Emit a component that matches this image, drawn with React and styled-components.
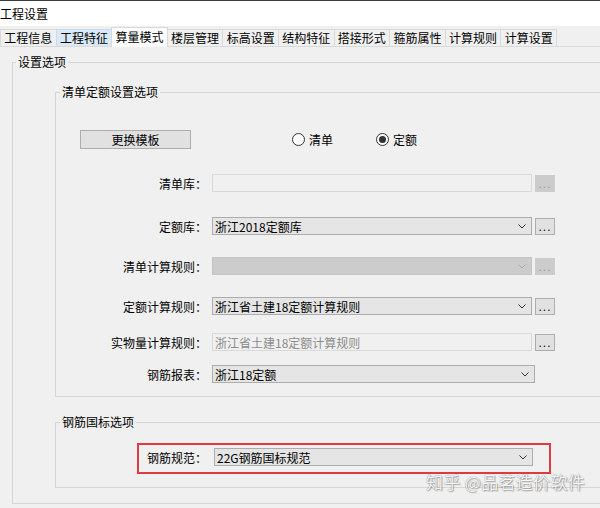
import React from 'react';
import styled, { createGlobalStyle } from 'styled-components';

const GlobalStyle = createGlobalStyle`
  html, body {
    margin: 0;
    padding: 0;
    overflow: hidden;
    background: #f0f0f0;
  }
  body {
    font-family: "Noto Sans CJK SC", "Microsoft YaHei", sans-serif;
    font-size: 12px;
    color: #000;
  }
`;

const Window = styled.div`
  position: relative;
  width: 600px;
  height: 508px;
  background: #f0f0f0;
  overflow: hidden;
`;

const TitleBar = styled.div`
  height: 25px;
  line-height: 25px;
  background: #fff;
  border-top: 1px solid #3a3a3a;
  padding-left: 0;
`;

const TabStrip = styled.div`
  display: flex;
  align-items: flex-end;
  height: 20px;
  border-bottom: 1px solid #d9d9d9;
`;

const Tab = styled.div`
  position: relative;
  box-sizing: border-box;
  width: 56.6px;
  margin-left: ${(p) => (p.$first ? '0' : '-1px')};
  height: ${(p) => (p.$active ? '20px' : '17px')};
  margin-bottom: ${(p) => (p.$active ? '-1px' : '0')};
  line-height: ${(p) => (p.$active ? '18px' : '16px')};
  text-align: center;
  border: 1px solid ${(p) => (p.$hover ? '#c5dcf2' : '#d9d9d9')};
  border-bottom: none;
  background: ${(p) => (p.$active ? '#fff' : p.$hover ? '#d9e9f8' : '#f0f0f0')};
  z-index: ${(p) => (p.$active ? 1 : 0)};
  white-space: nowrap;
`;

const TabPage = styled.div`
  padding: 7px 0 0 12px;
`;

const Group = styled.fieldset`
  margin: ${(p) => p.$top || 0}px 0 0 0;
  padding: 0;
  border: 1px solid #d5d5d5;
  min-inline-size: 0;
  width: ${(p) => p.$width || 'auto'};
  box-sizing: border-box;
`;

const Legend = styled.legend`
  padding: 0 2px;
  margin-left: ${(p) => p.$offset}px;
  line-height: 16px;
  font-size: 12px;
`;

const OuterBody = styled.div`
  padding: 14px 0 15px 42px;
`;

const SettingsBody = styled.div`
  display: flex;
  flex-direction: column;
  padding: 29px 0 13px 0;
`;

const TopRow = styled.div`
  display: flex;
  align-items: center;
  height: 20px;
  padding-left: 24px;
`;

const PushButton = styled.div`
  box-sizing: border-box;
  width: 111px;
  height: 19px;
  line-height: 17px;
  text-align: center;
  background: #e1e1e1;
  border: 1px solid #adadad;
`;

const RadioGroup = styled.div`
  display: flex;
  align-items: center;
  margin-left: 101px;
  gap: 43px;
`;

const RadioItem = styled.label`
  display: flex;
  align-items: center;
  gap: 4px;
`;

const RadioCircle = styled.span`
  box-sizing: border-box;
  width: 13px;
  height: 13px;
  border-radius: 50%;
  border: 1px solid #333;
  background: #fff;
  display: flex;
  align-items: center;
  justify-content: center;

  &::after {
    content: '';
    width: 7px;
    height: 7px;
    border-radius: 50%;
    background: ${(p) => (p.$checked ? '#333' : 'transparent')};
  }
`;

const FormRow = styled.div`
  display: flex;
  align-items: center;
  margin-top: ${(p) => p.$top}px;
  height: 18px;
`;

const FieldLabel = styled.div`
  width: 151px;
  margin-right: 5px;
  text-align: right;
  white-space: nowrap;
`;

const Field = styled.div`
  box-sizing: border-box;
  display: flex;
  align-items: center;
  justify-content: space-between;
  width: ${(p) => p.$width || 320}px;
  height: 18px;
  padding: 0 5px 0 2px;
  white-space: nowrap;
  color: ${(p) => (p.$muted ? '#8c8c8c' : '#000')};
  background: ${(p) =>
    p.$variant === 'select' ? '#e5e5e5' : p.$variant === 'off' ? '#cccccc' : '#f0f0f0'};
  border: 1px solid
    ${(p) => (p.$variant === 'select' ? '#adadad' : p.$variant === 'off' ? '#c4c4c4' : '#d9d9d9')};
`;

const DotButton = styled.div`
  box-sizing: border-box;
  width: 20px;
  height: 17px;
  margin-left: 3px;
  line-height: 16px;
  text-align: center;
  letter-spacing: 1px;
  font-family: "Liberation Sans", sans-serif;
  color: ${(p) => (p.$disabled ? '#9a9a9a' : '#000')};
  background: ${(p) => (p.$disabled ? '#cccccc' : '#e1e1e1')};
  border: 1px solid ${(p) => (p.$disabled ? '#cccccc' : '#adadad')};
`;

const RebarBody = styled.div`
  padding: 13px 0 13px 81px;
`;

const Highlight = styled.div`
  box-sizing: border-box;
  display: flex;
  align-items: center;
  width: 414px;
  padding: 3px 16px 6px 8px;
  border: 2px solid #de3a40;
`;

const HighlightLabel = styled.div`
  width: 60px;
  margin-right: 7px;
  white-space: nowrap;
`;

const Watermark = styled.div`
  position: absolute;
  right: 15px;
  top: 470px;
  font-size: 17px;
  line-height: 24px;
  letter-spacing: 0.3px;
  color: rgba(255, 255, 255, 0.95);
  text-shadow: 0 0 1px rgba(0, 0, 0, 0.55), 1px 1px 1px rgba(0, 0, 0, 0.25);
  white-space: nowrap;
`;

const Chevron = ({ color = '#333' }) => (
  <svg width="8" height="5" viewBox="0 0 8 5">
    <polyline points="0.5,0.5 4,4 7.5,0.5" fill="none" stroke={color} strokeWidth="1" />
  </svg>
);

const tabs = ['工程信息', '工程特征', '算量模式', '楼层管理', '标高设置', '结构特征', '搭接形式', '箍筋属性', '计算规则', '计算设置'];

const App = () => {
  return (
    <>
      <GlobalStyle />
      <Window>
        <TitleBar>工程设置</TitleBar>
        <TabStrip>
          {tabs.map((t, i) => (
            <Tab key={t} $first={i === 0} $active={t === '算量模式'} $hover={t === '工程特征'}>
              {t}
            </Tab>
          ))}
        </TabStrip>
        <TabPage>
          <Group $width="640px">
            <Legend $offset={3}>设置选项</Legend>
            <OuterBody>
              <Group>
                <Legend $offset={4}>清单定额设置选项</Legend>
                <SettingsBody>
                  <TopRow>
                    <PushButton>更换模板</PushButton>
                    <RadioGroup>
                      <RadioItem>
                        <RadioCircle />
                        清单
                      </RadioItem>
                      <RadioItem>
                        <RadioCircle $checked />
                        定额
                      </RadioItem>
                    </RadioGroup>
                  </TopRow>

                  <FormRow $top={25}>
                    <FieldLabel>清单库：</FieldLabel>
                    <Field />
                    <DotButton $disabled>...</DotButton>
                  </FormRow>

                  <FormRow $top={25}>
                    <FieldLabel>定额库：</FieldLabel>
                    <Field $variant="select">
                      浙江2018定额库
                      <Chevron />
                    </Field>
                    <DotButton>...</DotButton>
                  </FormRow>

                  <FormRow $top={22}>
                    <FieldLabel>清单计算规则：</FieldLabel>
                    <Field $variant="off">
                      <span />
                      <Chevron color="#a8a8a8" />
                    </Field>
                    <DotButton $disabled>...</DotButton>
                  </FormRow>

                  <FormRow $top={22}>
                    <FieldLabel>定额计算规则：</FieldLabel>
                    <Field $variant="select">
                      浙江省土建18定额计算规则
                      <Chevron />
                    </Field>
                    <DotButton>...</DotButton>
                  </FormRow>

                  <FormRow $top={18}>
                    <FieldLabel>实物量计算规则：</FieldLabel>
                    <Field $muted>浙江省土建18定额计算规则</Field>
                    <DotButton>...</DotButton>
                  </FormRow>

                  <FormRow $top={14}>
                    <FieldLabel>钢筋报表：</FieldLabel>
                    <Field $variant="select" $width={323}>
                      浙江18定额
                      <Chevron />
                    </Field>
                  </FormRow>
                </SettingsBody>
              </Group>

              <Group $top={17}>
                <Legend $offset={4}>钢筋国标选项</Legend>
                <RebarBody>
                  <Highlight>
                    <HighlightLabel>钢筋规范：</HighlightLabel>
                    <Field $variant="select" $width={319}>
                      22G钢筋国标规范
                      <Chevron />
                    </Field>
                  </Highlight>
                </RebarBody>
              </Group>
            </OuterBody>
          </Group>
        </TabPage>
        <Watermark>知乎 @品茗造价软件</Watermark>
      </Window>
    </>
  );
};

export default App;
